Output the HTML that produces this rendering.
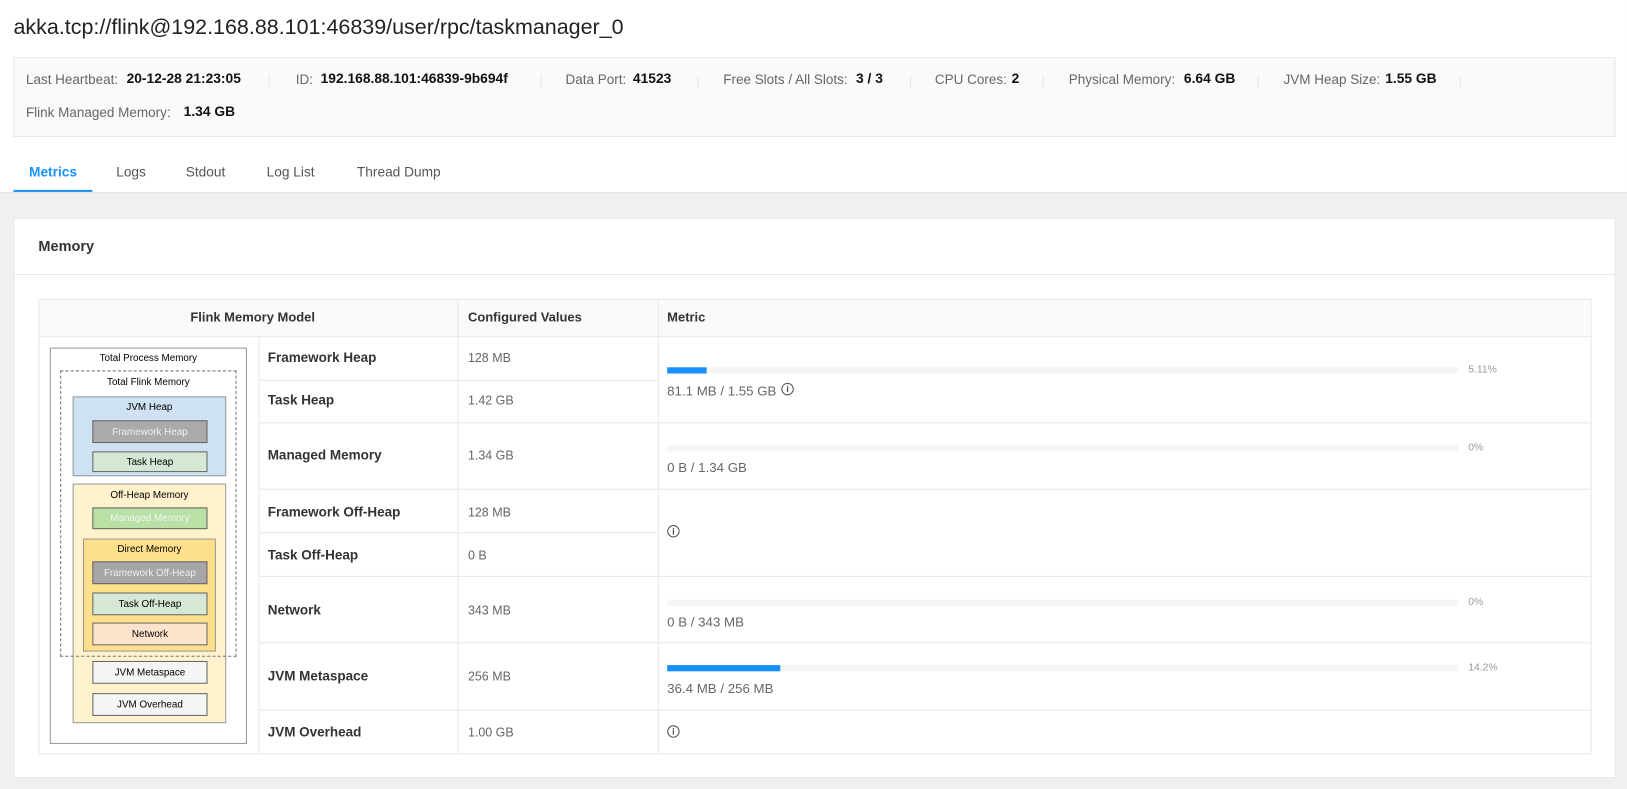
<!DOCTYPE html>
<html><head><meta charset="utf-8"><style>
*{box-sizing:border-box;margin:0;padding:0}
html,body{width:1627px;height:788px;overflow:hidden;background:#f0f0f0}
#w{position:absolute;left:0;top:0;width:1568px;height:760px;transform:scale(1.0376);transform-origin:0 0;font-family:"Liberation Sans",sans-serif;color:rgba(0,0,0,.65)}
.a{position:absolute;white-space:nowrap}
.l{font-size:13px;color:#666}
.v{font-size:13.3px;font-weight:bold;color:#111}
.sep{position:absolute;width:1px;height:14px;background:#e8e8e8}
.tab{position:absolute;top:158px;font-size:13.2px;color:#555}
.lbl{font-size:13px;font-weight:bold;color:#333}
.cfg{font-size:12px;color:#666}
.bar{position:absolute;left:643px;width:762px;height:6px;background:#f5f5f5}
.bar i{display:block;height:6px;background:#1890ff}
.pct{position:absolute;left:1415px;font-size:10px;color:#999}
.mt{position:absolute;left:643px;font-size:12.8px;color:#666}
.d{position:absolute;font-size:9.5px;text-align:center;border:1px solid #666;color:#000;display:flex;align-items:center;justify-content:center}
.ic{position:absolute;width:12px;height:12px;border:1px solid #555;border-radius:50%;font-size:9px;line-height:10px;text-align:center;color:#555;font-weight:bold}
</style></head><body><div id="w">
<div class="a" style="left:0;top:0;width:1568px;height:185px;background:#fff"></div>
<div class="a" style="left:13px;top:15px;font-size:20.7px;color:#222">akka.tcp://flink@192.168.88.101:46839/user/rpc/taskmanager_0</div>
<div class="a" style="left:13px;top:55px;width:1544px;height:77px;background:#fafafa;border:1px solid #e8e8e8"></div>
<span class="a l" style="left:25px;top:69px">Last Heartbeat:</span><span class="a v" style="left:122px;top:68px">20-12-28 21:23:05</span>
<div class="sep" style="left:259px;top:72px"></div>
<span class="a l" style="left:285px;top:69px">ID:</span><span class="a v" style="left:309px;top:68px">192.168.88.101:46839-9b694f</span>
<div class="sep" style="left:521px;top:72px"></div>
<span class="a l" style="left:545px;top:69px">Data Port:</span><span class="a v" style="left:610px;top:68px">41523</span>
<div class="sep" style="left:672px;top:72px"></div>
<span class="a l" style="left:697px;top:69px">Free Slots / All Slots:</span><span class="a v" style="left:825px;top:68px">3 / 3</span>
<div class="sep" style="left:877px;top:72px"></div>
<span class="a l" style="left:901px;top:69px">CPU Cores:</span><span class="a v" style="left:975px;top:68px">2</span>
<div class="sep" style="left:1005px;top:72px"></div>
<span class="a l" style="left:1030px;top:69px">Physical Memory:</span><span class="a v" style="left:1141px;top:68px">6.64 GB</span>
<div class="sep" style="left:1212px;top:72px"></div>
<span class="a l" style="left:1237px;top:69px">JVM Heap Size:</span><span class="a v" style="left:1335px;top:68px">1.55 GB</span>
<div class="sep" style="left:1407px;top:72px"></div>
<span class="a l" style="left:25px;top:101px">Flink Managed Memory:</span><span class="a v" style="left:177px;top:100px">1.34 GB</span>

<div class="tab" style="left:28px;color:#1890ff;font-weight:bold">Metrics</div>
<div class="tab" style="left:112px">Logs</div>
<div class="tab" style="left:179px">Stdout</div>
<div class="tab" style="left:257px">Log List</div>
<div class="tab" style="left:344px">Thread Dump</div>
<div class="a" style="left:13px;top:183px;width:76px;height:2px;background:#1890ff"></div>
<div class="a" style="left:0;top:185px;width:1568px;height:1px;background:#e8e8e8"></div>

<div class="a" style="left:13px;top:210px;width:1544px;height:540px;background:#fff;border:1px solid #e8e8e8"></div>
<div class="a" style="left:13px;top:264px;width:1544px;height:1px;background:#e8e8e8"></div>
<div class="a" style="left:37px;top:229px;font-size:14px;font-weight:bold;color:#333">Memory</div>

<div class="a" style="left:37px;top:288px;width:1497px;height:439px;border:1px solid #e8e8e8"></div>
<div class="a" style="left:38px;top:289px;width:1495px;height:36px;background:#fafafa;border-bottom:1px solid #e8e8e8"></div>
<div class="a lbl" style="left:38px;top:299px;width:411px;text-align:center;font-size:12.5px">Flink Memory Model</div>
<div class="a lbl" style="left:451px;top:299px;font-size:12.5px">Configured Values</div>
<div class="a lbl" style="left:643px;top:299px;font-size:12.5px">Metric</div>
<div class="a" style="left:441px;top:289px;width:1px;height:437px;background:#e8e8e8"></div>
<div class="a" style="left:634px;top:289px;width:1px;height:437px;background:#e8e8e8"></div>
<div class="a" style="left:249px;top:325px;width:1px;height:401px;background:#e8e8e8"></div>
<div class="a" style="left:249px;top:366px;width:385px;height:1px;background:#e8e8e8"></div>
<div class="a" style="left:249px;top:407px;width:1284px;height:1px;background:#e8e8e8"></div>
<div class="a" style="left:249px;top:471px;width:1284px;height:1px;background:#e8e8e8"></div>
<div class="a" style="left:249px;top:513px;width:385px;height:1px;background:#e8e8e8"></div>
<div class="a" style="left:249px;top:555px;width:1284px;height:1px;background:#e8e8e8"></div>
<div class="a" style="left:249px;top:619px;width:1284px;height:1px;background:#e8e8e8"></div>
<div class="a" style="left:249px;top:684px;width:1284px;height:1px;background:#e8e8e8"></div>

<div class="a lbl" style="left:258px;top:337px">Framework Heap</div><div class="a cfg" style="left:451px;top:338px">128 MB</div>
<div class="a lbl" style="left:258px;top:378px">Task Heap</div><div class="a cfg" style="left:451px;top:379px">1.42 GB</div>
<div class="a lbl" style="left:258px;top:431px">Managed Memory</div><div class="a cfg" style="left:451px;top:432px">1.34 GB</div>
<div class="a lbl" style="left:258px;top:486px">Framework Off-Heap</div><div class="a cfg" style="left:451px;top:487px">128 MB</div>
<div class="a lbl" style="left:258px;top:527px">Task Off-Heap</div><div class="a cfg" style="left:451px;top:528px">0 B</div>
<div class="a lbl" style="left:258px;top:580px">Network</div><div class="a cfg" style="left:451px;top:581px">343 MB</div>
<div class="a lbl" style="left:258px;top:644px">JVM Metaspace</div><div class="a cfg" style="left:451px;top:645px">256 MB</div>
<div class="a lbl" style="left:258px;top:698px">JVM Overhead</div><div class="a cfg" style="left:451px;top:699px">1.00 GB</div>

<div class="bar" style="top:354px"><i style="width:38px"></i></div><div class="pct" style="top:351px">5.11%</div>
<div class="mt" style="top:369px">81.1 MB / 1.55 GB</div><div class="ic" style="left:753px;top:369px">i</div>
<div class="bar" style="top:429px"></div><div class="pct" style="top:426px">0%</div>
<div class="mt" style="top:443px">0 B / 1.34 GB</div>
<div class="ic" style="left:643px;top:506px">i</div>
<div class="bar" style="top:578px"></div><div class="pct" style="top:575px">0%</div>
<div class="mt" style="top:592px">0 B / 343 MB</div>
<div class="bar" style="top:641px"><i style="width:109px"></i></div><div class="pct" style="top:638px">14.2%</div>
<div class="mt" style="top:656px">36.4 MB / 256 MB</div>
<div class="ic" style="left:643px;top:699px">i</div>

<div class="a" style="left:48px;top:335px;width:190px;height:382px;border:1px solid #999;background:#fff"></div>
<div class="a" style="left:48px;top:340px;width:190px;text-align:center;font-size:9.5px;color:#000">Total Process Memory</div>
<div class="a" style="left:70px;top:466px;width:148px;height:231px;background:#fff2cc;border:1px solid #999"></div>
<div class="a" style="left:58px;top:357px;width:170px;height:276px;border:1px dashed #777"></div>
<div class="a" style="left:58px;top:363px;width:170px;text-align:center;font-size:9.5px;color:#000">Total Flink Memory</div>
<div class="a" style="left:70px;top:382px;width:148px;height:77px;background:#cfe2f3;border:1px solid #999"></div>
<div class="a" style="left:70px;top:387px;width:148px;text-align:center;font-size:9.5px;color:#000">JVM Heap</div>
<div class="d" style="left:89px;top:405px;width:111px;height:22px;background:#aaa;color:#eee">Framework Heap</div>
<div class="d" style="left:89px;top:435px;width:111px;height:20px;background:#d5e8d4">Task Heap</div>
<div class="a" style="left:70px;top:472px;width:148px;text-align:center;font-size:9.5px;color:#000">Off-Heap Memory</div>
<div class="d" style="left:89px;top:489px;width:111px;height:21px;background:#b9e0a5;color:#f4f4f4">Managed Memory</div>
<div class="a" style="left:80px;top:519px;width:128px;height:109px;background:#ffe08a;border:1px solid #999"></div>
<div class="a" style="left:80px;top:524px;width:128px;text-align:center;font-size:9.5px;color:#000">Direct Memory</div>
<div class="d" style="left:89px;top:541px;width:111px;height:22px;background:#a6a6a6;color:#eee">Framework Off-Heap</div>
<div class="d" style="left:89px;top:571px;width:111px;height:22px;background:#d5e8d4">Task Off-Heap</div>
<div class="d" style="left:89px;top:600px;width:111px;height:22px;background:#fde3cc">Network</div>
<div class="d" style="left:89px;top:637px;width:111px;height:22px;background:#f5f5f5">JVM Metaspace</div>
<div class="d" style="left:89px;top:668px;width:111px;height:22px;background:#f5f5f5">JVM Overhead</div>
</div></body></html>
